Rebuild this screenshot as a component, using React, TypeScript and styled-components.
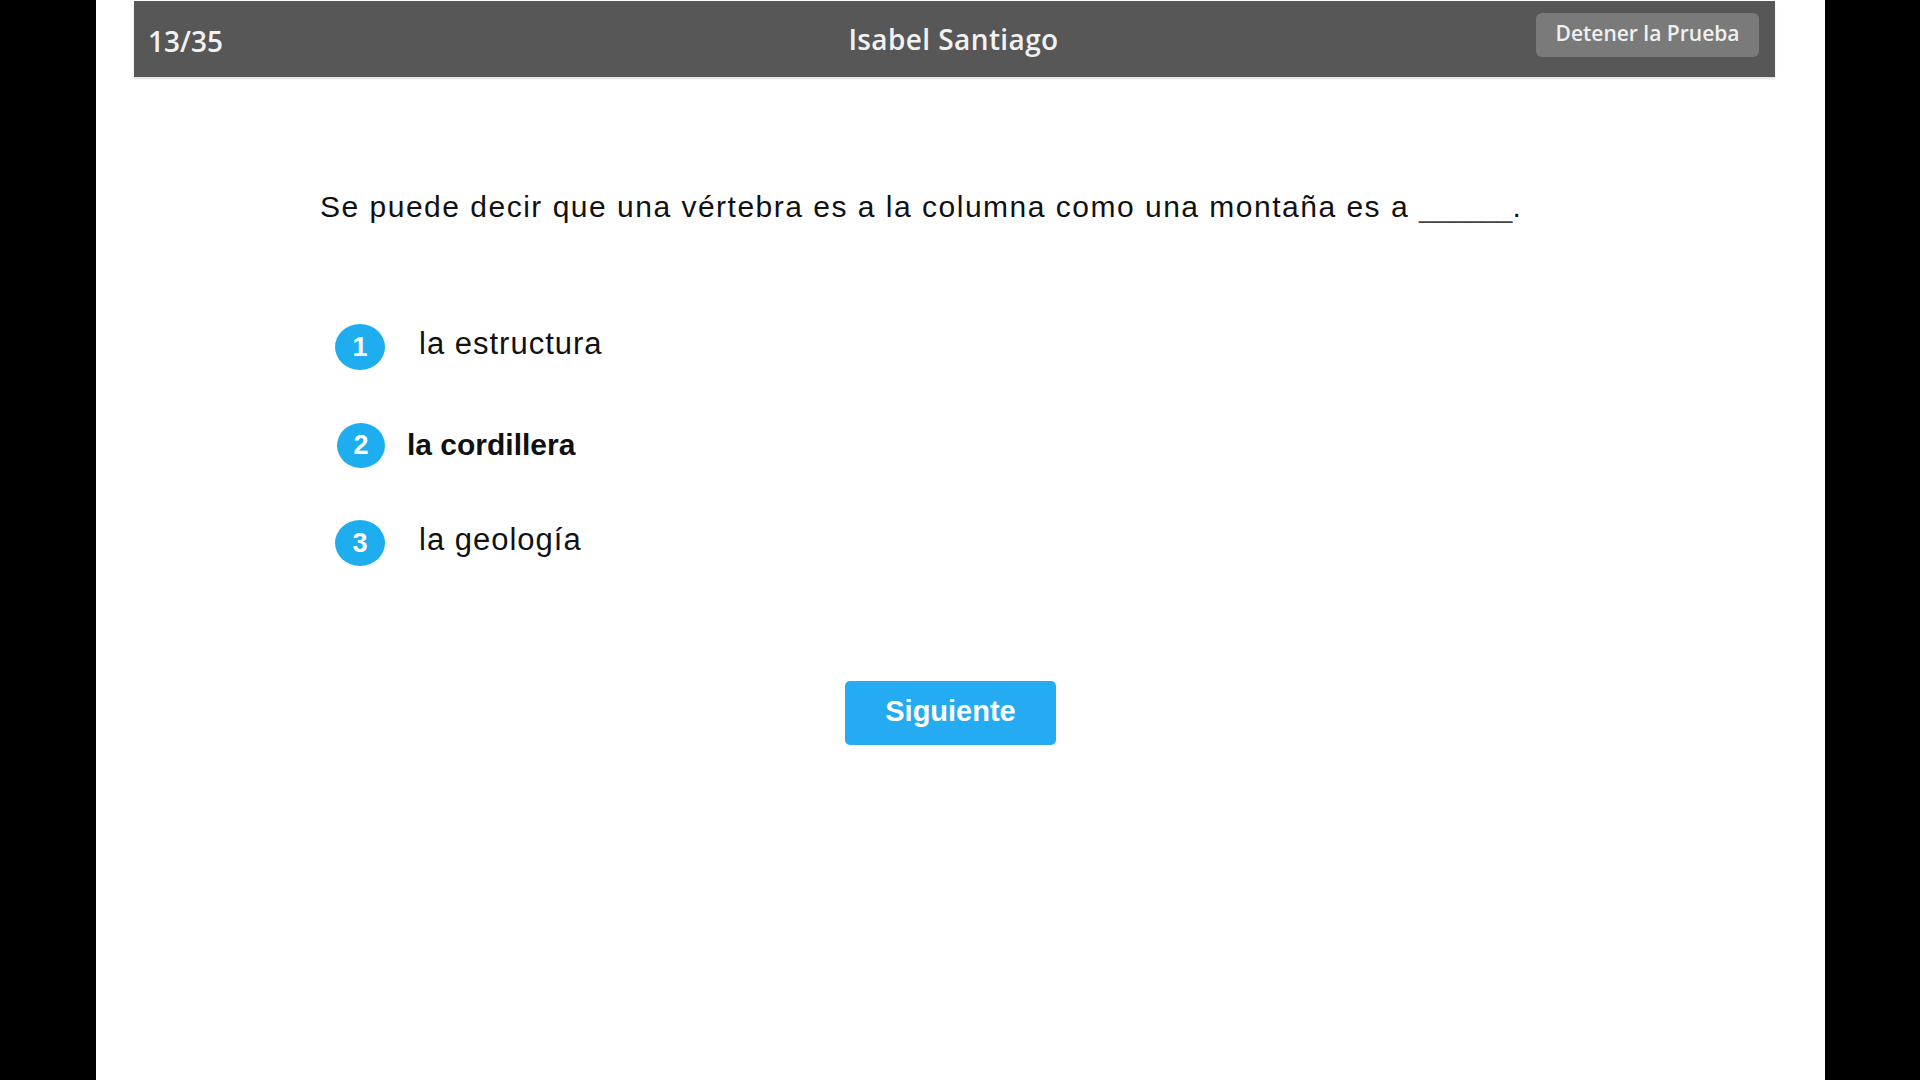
import styled, { createGlobalStyle } from "styled-components";

const GlobalStyle = createGlobalStyle`
  html, body {
    margin: 0;
    padding: 0;
    background: #000;
  }
  * {
    box-sizing: border-box;
  }
`;

const Screen = styled.div`
  width: 1729px;
  min-height: 1080px;
  margin-left: 96px;
  background: #fff;
  display: flex;
  flex-direction: column;
`;

const Header = styled.header`
  margin: 1px 50px 0 38px;
  height: 76px;
  background: #575757;
  box-shadow: 0 2px 2px rgba(0, 0, 0, 0.12);
  display: grid;
  grid-template-columns: 1fr auto 1fr;
  align-items: center;
  padding: 0 16px 0 14px;
  font-family: "Open Sans", "Noto Sans", sans-serif;
  color: #f2f2f2;
`;

const Counter = styled.div`
  font-size: 28px;
  font-weight: 600;
  line-height: 1;
  margin-top: 4px;
`;

const Student = styled.div`
  font-size: 28px;
  font-weight: 600;
  letter-spacing: 0.4px;
  line-height: 1;
  justify-self: center;
`;

const StopButton = styled.button`
  justify-self: end;
  align-self: start;
  margin-top: 12px;
  width: 223px;
  height: 44px;
  border: none;
  border-radius: 6px;
  background: #7a7a7a;
  color: #f0f0f0;
  font-family: "Open Sans", "Noto Sans", sans-serif;
  font-size: 21px;
  font-weight: 600;
  padding: 0 0 4px;
  cursor: pointer;
`;

const Content = styled.main`
  padding-left: 224px;
  font-family: "Liberation Sans", Arial, sans-serif;
  color: #111;
`;

const Question = styled.p`
  margin: 114px 0 0;
  font-size: 30px;
  letter-spacing: 1.5px;
  line-height: 32px;
`;

const Blank = styled.span`
  font-size: 28px;
  letter-spacing: 0;
  color: #444;
`;

const Options = styled.div`
  margin-top: 98px;
  display: flex;
  flex-direction: column;
  gap: 48px;
`;

const Option = styled.div<{ $selected?: boolean }>`
  display: flex;
  align-items: center;
  height: 50px;
  padding-left: ${({ $selected }) => ($selected ? "17px" : "15px")};
  gap: ${({ $selected }) => ($selected ? "22px" : "34px")};
  cursor: pointer;
`;

const Badge = styled.span<{ $selected?: boolean }>`
  width: ${({ $selected }) => ($selected ? "48px" : "50px")};
  height: ${({ $selected }) => ($selected ? "45px" : "46px")};
  border-radius: 50%;
  background: #1eaef0;
  color: #fff;
  font-size: 27px;
  font-weight: 700;
  display: flex;
  align-items: center;
  justify-content: center;
  flex-shrink: 0;
`;

const OptionLabel = styled.span<{ $selected?: boolean }>`
  font-size: ${({ $selected }) => ($selected ? "30px" : "31px")};
  line-height: 34px;
  font-weight: ${({ $selected }) => ($selected ? 700 : 400)};
  letter-spacing: ${({ $selected }) => ($selected ? "0" : "1px")};
  margin-bottom: ${({ $selected }) => ($selected ? "0" : "6px")};
`;

const Footer = styled.div`
  margin-top: 113px;
  display: flex;
  justify-content: center;
  padding-right: 20px;
`;

const NextButton = styled.button`
  width: 211px;
  height: 64px;
  border: none;
  border-radius: 5px;
  background: #24abf2;
  color: #fff;
  font-family: "Liberation Sans", Arial, sans-serif;
  font-size: 29px;
  font-weight: 700;
  padding: 0 0 4px;
  cursor: pointer;
`;

const answers = [
  { n: 1, text: "la estructura" },
  { n: 2, text: "la cordillera", selected: true },
  { n: 3, text: "la geología" },
];

export default function App() {
  return (
    <>
      <GlobalStyle />
      <Screen>
        <Header>
          <Counter>13/35</Counter>
          <Student>Isabel Santiago</Student>
          <StopButton>Detener la Prueba</StopButton>
        </Header>
        <Content>
          <Question>
            Se puede decir que una vértebra es a la columna como una montaña es
            a <Blank>______</Blank>.
          </Question>
          <Options>
            {answers.map((a) => (
              <Option key={a.n} $selected={a.selected}>
                <Badge $selected={a.selected}>{a.n}</Badge>
                <OptionLabel $selected={a.selected}>{a.text}</OptionLabel>
              </Option>
            ))}
          </Options>
        </Content>
        <Footer>
          <NextButton>Siguiente</NextButton>
        </Footer>
      </Screen>
    </>
  );
}
